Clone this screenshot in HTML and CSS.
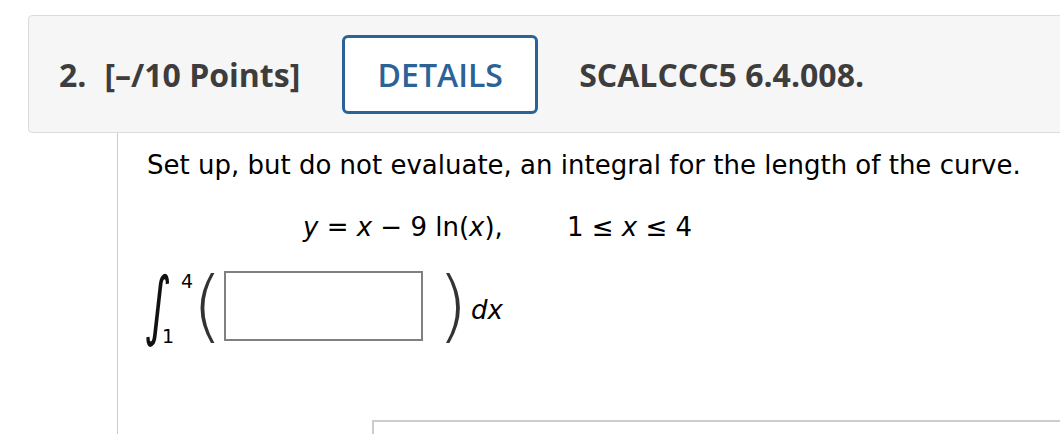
FILE: index.html
```html
<!DOCTYPE html>
<html>
<head>
<meta charset="utf-8">
<link rel="stylesheet" href="styles.css">
</head>
<body>
<div class="question">
  <div class="q-header">
    <span class="q-num">2.</span>
    <span class="q-points">[–/10 Points]</span>
    <button class="details-btn">DETAILS</button>
    <span class="q-ref">SCALCCC5 6.4.008.</span>
  </div>
  <div class="q-body">
    <p class="prompt">Set up, but do not evaluate, an integral for the length of the curve.</p>
    <div class="equation">
      <span class="eq-main"><i>y</i> = <i>x</i> − 9 ln(<i>x</i>),</span>
      <span class="eq-range">1 ≤ <i>x</i> ≤ 4</span>
    </div>
    <div class="integral-row">
      <span class="int-sign">∫</span>
      <span class="limits"><span class="lim-up">4</span><span class="lim-low">1</span></span>
      <span class="paren paren-open">(</span>
      <input class="answer" type="text">
      <span class="paren paren-close">)</span>
      <span class="dx"><i>dx</i></span>
    </div>
    <div class="next-box"></div>
  </div>
</div>
</body>
</html>
```

FILE: styles.css
```css
html, body {
  margin: 0;
  padding: 0;
  background: #ffffff;
  overflow: hidden;
}

.question {
  padding: 15px 0 0 28px;
  width: 1100px;
}

.q-header {
  display: flex;
  align-items: center;
  height: 116px;
  background: #f6f6f6;
  border: 1px solid #dcdcdc;
  border-radius: 4px;
  padding-left: 30px;
  font-family: "Open Sans", sans-serif;
  font-weight: 700;
  font-size: 32px;
  color: #3d3d3d;
}

.q-num {
  margin-right: 18px;
}

.q-points {
  margin-right: 42px;
}

.details-btn {
  font-family: "Open Sans", sans-serif;
  font-weight: 600;
  font-size: 32px;
  color: #2b6399;
  background: #ffffff;
  border: 3px solid #2b6399;
  border-radius: 6px;
  width: 196px;
  height: 79px;
  padding: 0;
  margin-right: 41px;
}

.q-body {
  margin-left: 89px;
  border-left: 1px solid #cccccc;
  padding-left: 29px;
  padding-top: 12px;
  height: 320px;
  font-family: "DejaVu Sans", Verdana, sans-serif;
  font-size: 26px;
  color: #000000;
}

.prompt {
  margin: 0;
  line-height: 40px;
}

.equation {
  margin-top: 26px;
  margin-left: 156px;
  line-height: 32px;
  display: flex;
  gap: 64px;
}

.integral-row {
  display: flex;
  align-items: center;
  margin-top: 23px;
  height: 80px;
}

.int-sign {
  font-family: "DejaVu Sans", sans-serif;
  font-size: 36px;
  line-height: 80px;
  display: inline-block;
  transform: scale(1.25, 2.1) skewX(-8deg);
  transform-origin: 50% 50%;
  width: 22px;
  text-align: center;
  color: #111111;
}

.limits {
  display: flex;
  flex-direction: column;
  justify-content: space-between;
  height: 80px;
  font-size: 19px;
  line-height: 20px;
  width: 25px;
}

.lim-up {
  margin-left: 12px;
  padding-top: 5px;
}

.lim-low {
  margin-left: -7px;
}

.paren {
  font-family: "DejaVu Sans", sans-serif;
  font-weight: 200;
  font-size: 78px;
  line-height: 80px;
  display: inline-block;
  color: #333333;
  margin: 0 -6px;
}

.paren-open {
  margin-left: -2px;
}

.answer {
  width: 199px;
  height: 70px;
  box-sizing: border-box;
  border: 2px solid #808080;
  margin: 0 20px 0 8px;
  padding: 0;
  background: #ffffff;
}

.dx {
  margin-left: 9px;
  margin-top: 8px;
}

.next-box {
  margin-top: 74px;
  margin-left: 225px;
  height: 40px;
  border-top: 2px solid #cccccc;
  border-left: 2px solid #cccccc;
}
```
